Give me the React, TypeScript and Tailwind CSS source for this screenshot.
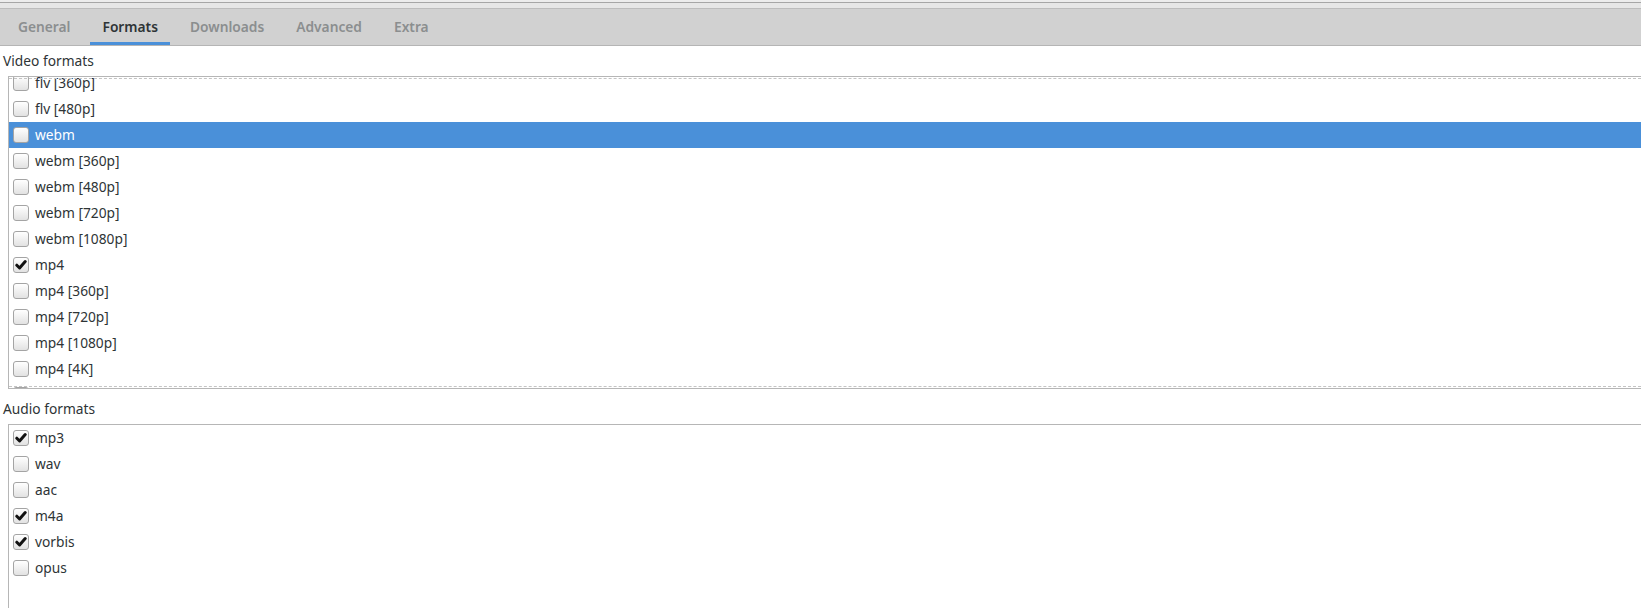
import React from 'react';

const videoFormats = [
  { name: 'flv [360p]', checked: false },
  { name: 'flv [480p]', checked: false },
  { name: 'webm', checked: false, selected: true },
  { name: 'webm [360p]', checked: false },
  { name: 'webm [480p]', checked: false },
  { name: 'webm [720p]', checked: false },
  { name: 'webm [1080p]', checked: false },
  { name: 'mp4', checked: true },
  { name: 'mp4 [360p]', checked: false },
  { name: 'mp4 [720p]', checked: false },
  { name: 'mp4 [1080p]', checked: false },
  { name: 'mp4 [4K]', checked: false },
];

const audioFormats = [
  { name: 'mp3', checked: true },
  { name: 'wav', checked: false },
  { name: 'aac', checked: false },
  { name: 'm4a', checked: true },
  { name: 'vorbis', checked: true },
  { name: 'opus', checked: false },
];

const tabs = ['General', 'Formats', 'Downloads', 'Advanced', 'Extra'];

const CheckBox: React.FC<{ checked: boolean }> = ({ checked }) => (
  <span className="flex h-[16px] w-[16px] shrink-0 items-center justify-center rounded-[3px] border border-[#a4a4a4] bg-gradient-to-b from-white to-[#e2e2e2]">
    {checked && (
      <svg width="12" height="12" viewBox="0 0 12 12">
        <path d="M1.8 6.2 L4.6 9 L10.2 2.6" fill="none" stroke="#111" strokeWidth="3" strokeLinecap="round" strokeLinejoin="round" />
      </svg>
    )}
  </span>
);

interface Item {
  name: string;
  checked: boolean;
  selected?: boolean;
}

const Row: React.FC<{ item: Item }> = ({ item }) => (
  <div
    className={`flex h-[26px] items-center gap-[6px] pl-[4px] ${
      item.selected ? 'bg-[#4a90d9] text-white' : 'text-[#2e3436]'
    }`}
  >
    <CheckBox checked={item.checked} />
    <span>{item.name}</span>
  </div>
);

export default function App() {
  return (
    <div className="h-[608px] w-[1641px] overflow-hidden bg-white text-[13.75px] leading-[20px] text-[#2e3436] [font-family:'Noto_Sans',sans-serif]">
      {/* window top strip */}
      <div className="h-[2px] bg-[#ececec]" />
      <div className="h-px bg-[#a6a6a6]" />
      <div className="h-[5px] bg-[#e6e6e6]" />
      <div className="h-px bg-[#bcbcbc]" />

      {/* tabs */}
      <div className="flex h-[37px] gap-2 border-b border-[#b5b5b5] bg-[#d1d1d1] pl-[6px] text-[13.75px]">
        {tabs.map((t) => (
          <div
            key={t}
            className={`flex items-center border-b-[3px] px-3 pt-[3px] font-semibold ${
              t === 'Formats' ? 'border-[#4a90d9] text-[#2e3436]' : 'border-transparent text-[#8b8e8f]'
            }`}
          >
            {t}
          </div>
        ))}
      </div>

      {/* video */}
      <div className="pl-[3px] pt-[5px]">Video formats</div>
      <div className="relative ml-[8px] mt-[5px] h-[313px] overflow-hidden border-y border-l border-[#b6b6b6]">
        <div className="-mt-[7px]">
          {videoFormats.map((f) => (
            <Row key={f.name} item={f} />
          ))}
          <div className="flex h-[26px] items-center pl-[4px]">
            <CheckBox checked={false} />
          </div>
        </div>
        <div className="absolute left-0 right-0 top-[1px] border-t border-dashed border-[#c4c4c4]" />
        <div className="absolute bottom-[1px] left-0 right-0 border-t border-dashed border-[#c4c4c4]" />
      </div>

      {/* audio */}
      <div className="pl-[3px] pt-[10px]">Audio formats</div>
      <div className="ml-[8px] mt-[5px] h-[200px] border-l border-t border-[#b6b6b6]">
        {audioFormats.map((f) => (
          <Row key={f.name} item={f} />
        ))}
      </div>
    </div>
  );
}
